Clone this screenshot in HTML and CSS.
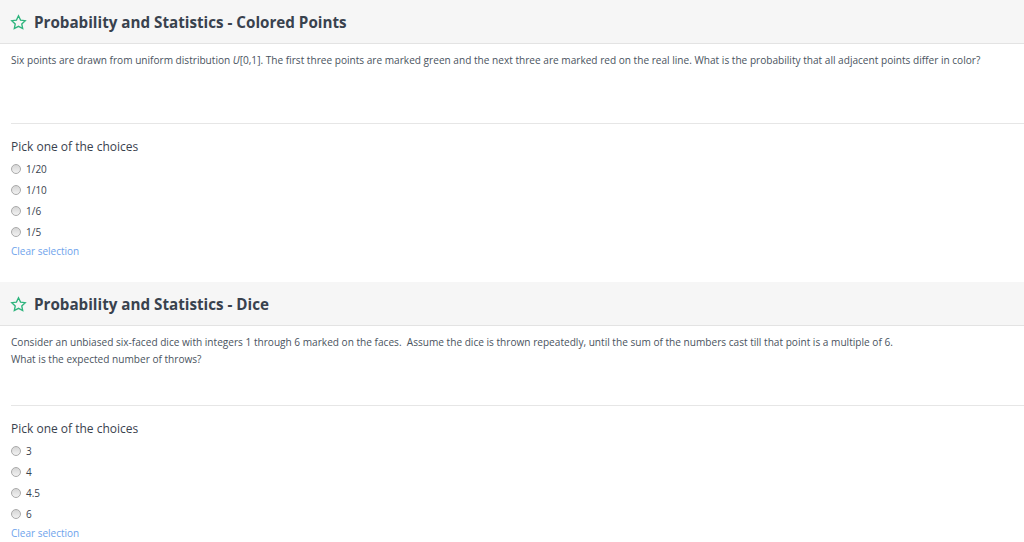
FILE: index.html
```html
<!DOCTYPE html>
<html lang="en">
<head>
    <meta charset="UTF-8">
    <title>Probability and Statistics</title>
    <link rel="stylesheet" href="styles.css">
</head>
<body>
    <div class="challenge">
        <div class="challenge-header">
            <svg class="star" viewBox="0 0 24 24" width="17" height="17">
                <path d="M12 2.5l2.9 6.1 6.6.8-4.9 4.6 1.3 6.6L12 17.4l-5.9 3.2 1.3-6.6-4.9-4.6 6.6-.8z" fill="none" stroke="#2fb57e" stroke-width="1.9" stroke-linejoin="miter"/>
            </svg>
            <h2>Probability and Statistics - Colored Points</h2>
        </div>
        <div class="question">
            <p>Six points are drawn from uniform distribution <i>U</i>[0,1]. The first three points are marked green and the next three are marked red on the real line. What is the probability that all adjacent points differ in color?</p>
        </div>
        <div class="choices">
            <h3>Pick one of the choices</h3>
            <label class="choice"><input type="radio" name="q1"> 1/20</label>
            <label class="choice"><input type="radio" name="q1"> 1/10</label>
            <label class="choice"><input type="radio" name="q1"> 1/6</label>
            <label class="choice"><input type="radio" name="q1"> 1/5</label>
            <a class="clear-link" href="#">Clear selection</a>
        </div>
    </div>

    <div class="challenge">
        <div class="challenge-header">
            <svg class="star" viewBox="0 0 24 24" width="17" height="17">
                <path d="M12 2.5l2.9 6.1 6.6.8-4.9 4.6 1.3 6.6L12 17.4l-5.9 3.2 1.3-6.6-4.9-4.6 6.6-.8z" fill="none" stroke="#2fb57e" stroke-width="1.9" stroke-linejoin="miter"/>
            </svg>
            <h2>Probability and Statistics - Dice</h2>
        </div>
        <div class="question">
            <p>Consider an unbiased six-faced dice with integers 1 through 6 marked on the faces.&nbsp; Assume the dice is thrown repeatedly, until the sum of the numbers cast till that point is a multiple of 6.<br>What is the expected number of throws?</p>
        </div>
        <div class="choices">
            <h3>Pick one of the choices</h3>
            <label class="choice"><input type="radio" name="q2"> 3</label>
            <label class="choice"><input type="radio" name="q2"> 4</label>
            <label class="choice"><input type="radio" name="q2"> 4.5</label>
            <label class="choice"><input type="radio" name="q2"> 6</label>
            <a class="clear-link" href="#">Clear selection</a>
        </div>
    </div>
</body>
</html>
```

FILE: styles.css
```css
body {
    margin: 0;
    font-family: "Open Sans", Arial, sans-serif;
    color: #4a5360;
    background: #fff;
}

.challenge {
    margin-bottom: 22px;
}

.challenge-header {
    display: flex;
    align-items: center;
    height: 43px;
    padding: 0 10px;
    background: #f6f6f6;
    border-bottom: 1px solid #e3e3e3;
}

.star {
    flex: none;
    margin-right: 7px;
    margin-top: 1px;
}

.challenge-header h2 {
    margin: 0;
    font-size: 15.2px;
    font-weight: 700;
    color: #39424e;
}

.question {
    box-sizing: border-box;
    min-height: 80px;
    margin-left: 11px;
    padding-top: 8px;
    border-bottom: 1px solid #e6e6e6;
}

.question p {
    margin: 0;
    font-size: 10.1px;
    line-height: 17px;
}

.choices {
    padding: 14px 11px 0;
}

.choices h3 {
    margin: 0 0 3px;
    font-size: 12px;
    font-weight: 400;
    line-height: 17px;
    color: #39424e;
}

.choice {
    display: flex;
    align-items: center;
    height: 21px;
    font-size: 10px;
    color: #39424e;
}

.choice input {
    appearance: none;
    width: 10px;
    height: 10px;
    margin: 0 5px 0 0;
    border: 1px solid #aaa;
    border-radius: 50%;
    background: linear-gradient(#d6d6d6, #f2f2f2);
}

.clear-link {
    display: block;
    font-size: 10px;
    line-height: 18px;
    color: #6ea3ec;
    text-decoration: none;
}
```
